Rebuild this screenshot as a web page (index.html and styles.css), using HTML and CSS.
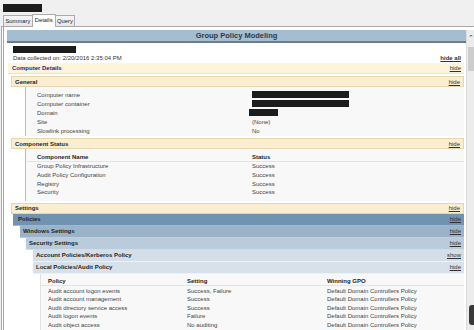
FILE: index.html
```html
<!DOCTYPE html>
<html lang="en">
<head>
    <meta charset="UTF-8">
    <meta name="viewport" content="width=device-width, initial-scale=1.0">
    <title>Group Policy Modeling</title>
    <link rel="stylesheet" href="styles.css">
</head>
<body>
    <div class="window">
        <div class="caption">
            <span class="redact caption-redact"></span>
        </div>

        <div class="tabs">
            <span class="tab">Summary</span>
            <span class="tab active">Details</span>
            <span class="tab">Query</span>
        </div>

        <div class="panel">
            <div class="report">
                <div class="report-title">Group Policy Modeling</div>

                <div class="report-body">
                    <div class="redact name-redact"></div>
                    <div class="meta">
                        <span>Data collected on: 2/20/2016 2:35:04 PM</span>
                        <a class="toggle strong">hide all</a>
                    </div>

                    <!-- Computer details -->
                    <div class="section computer">
                        <span>Computer Details</span>
                        <a class="toggle">hide</a>
                    </div>

                    <div class="section cream">
                        <span>General</span>
                        <a class="toggle">hide</a>
                    </div>
                    <div class="block list">
                        <div class="row"><span>Computer name</span><span class="redact value-redact"></span></div>
                        <div class="row"><span>Computer container</span><span class="redact value-redact"></span></div>
                        <div class="row"><span>Domain</span><span class="redact value-redact short"></span></div>
                        <div class="row"><span>Site</span><span>(None)</span></div>
                        <div class="row"><span>Slowlink processing</span><span>No</span></div>
                    </div>

                    <div class="section cream">
                        <span>Component Status</span>
                        <a class="toggle">hide</a>
                    </div>
                    <div class="block table">
                        <div class="row head"><span>Component Name</span><span>Status</span></div>
                        <div class="row"><span>Group Policy Infrastructure</span><span>Success</span></div>
                        <div class="row"><span>Audit Policy Configuration</span><span>Success</span></div>
                        <div class="row"><span>Registry</span><span>Success</span></div>
                        <div class="row"><span>Security</span><span>Success</span></div>
                    </div>

                    <!-- Settings tree -->
                    <div class="section cream">
                        <span>Settings</span>
                        <a class="toggle">hide</a>
                    </div>
                    <div class="section level-1">
                        <span>Policies</span>
                        <a class="toggle">hide</a>
                    </div>
                    <div class="section level-2">
                        <span>Windows Settings</span>
                        <a class="toggle">hide</a>
                    </div>
                    <div class="section level-3">
                        <span>Security Settings</span>
                        <a class="toggle">hide</a>
                    </div>
                    <div class="section level-4">
                        <span>Account Policies/Kerberos Policy</span>
                        <a class="toggle">show</a>
                    </div>
                    <div class="section level-4 last">
                        <span>Local Policies/Audit Policy</span>
                        <a class="toggle">hide</a>
                    </div>
                    <div class="block policy-table">
                        <div class="row head"><span>Policy</span><span>Setting</span><span>Winning GPO</span></div>
                        <div class="row"><span>Audit account logon events</span><span>Success, Failure</span><span>Default Domain Controllers Policy</span></div>
                        <div class="row"><span>Audit account management</span><span>Success</span><span>Default Domain Controllers Policy</span></div>
                        <div class="row"><span>Audit directory service access</span><span>Success</span><span>Default Domain Controllers Policy</span></div>
                        <div class="row"><span>Audit logon events</span><span>Failure</span><span>Default Domain Controllers Policy</span></div>
                        <div class="row"><span>Audit object access</span><span>No auditing</span><span>Default Domain Controllers Policy</span></div>
                    </div>
                </div>
            </div>

            <div class="scrollbar">
                <span class="scroll-arrow">&#8963;</span>
                <span class="scroll-thumb"></span>
            </div>
        </div>

        <div class="edge-handle"></div>
    </div>
</body>
</html>
```

FILE: styles.css
```css
:root {
    --window-bg: #f0f0f0;
    --border-color: #a9a9a9;
    --cream: #fdf4dc;
    --cream-dark: #fbedcf;
    --cream-border: #e6d6ae;
    --text-color: #2a2a2a;
    --muted-text: #444;
}

body {
    margin: 0;
    padding: 0;
    background-color: var(--window-bg);
    font-family: 'Liberation Sans', Arial, sans-serif;
    font-size: 6px;
    color: var(--text-color);
    overflow: hidden;
}

.window {
    position: relative;
    width: 474px;
    height: 330px;
    overflow: hidden;
}

.redact {
    display: block;
    background-color: #1c1c1c;
}

.caption {
    height: 14px;
    padding: 4px 0 0 3px;
    box-sizing: border-box;
}

.caption-redact {
    width: 39px;
    height: 8px;
}

/* Tabs */
.tabs {
    display: flex;
    align-items: flex-end;
    height: 12px;
    padding-left: 3px;
}

.tab {
    height: 10px;
    line-height: 10px;
    padding: 0 1.5px;
    border: 1px solid #acacac;
    border-bottom: none;
    margin-right: -1px;
    background: linear-gradient(#f5f5f5, #e6e6e6);
    font-size: 5.8px;
    color: #222;
}

.tab.active {
    height: 12px;
    line-height: 11px;
    padding: 0 2px;
    background: #fff;
    position: relative;
    z-index: 1;
    margin-bottom: -1px;
}

/* Panel */
.panel {
    display: flex;
    height: 304px;
    margin-left: 1px;
    border-top: 1px solid var(--border-color);
    border-left: 3px double var(--border-color);
    background-color: #fff;
}

.report {
    flex: 1;
    padding: 3px 0 0 3px;
}

.report-title {
    height: 11px;
    line-height: 11px;
    text-align: center;
    font-size: 7.5px;
    font-weight: bold;
    color: #2b3a4a;
    background-color: #a5bdd0;
    border-bottom: 2px solid #6f7b87;
}

.report-body {
    padding: 0 2px 0 1px;
}

.name-redact {
    width: 63px;
    height: 7px;
    margin: 3px 0 0 5px;
}

.meta {
    display: flex;
    justify-content: space-between;
    align-items: center;
    height: 10px;
    padding: 0 3px 0 5px;
    color: #333;
}

.toggle {
    color: #333;
    text-decoration: underline;
}

.toggle.strong {
    font-weight: bold;
}

/* Section headers */
.section {
    display: flex;
    justify-content: space-between;
    align-items: center;
    height: 11px;
    padding: 0 3px;
    box-sizing: border-box;
    font-weight: bold;
    color: #1f1f1f;
}

.section .toggle {
    font-weight: normal;
}

.section.computer {
    height: 11px;
    padding-left: 4px;
    background-color: var(--cream);
    border-bottom: 1px solid #efe3c2;
    color: #23238c;
}

.section.cream {
    margin: 2px 0 0 3px;
    background-color: var(--cream-dark);
    border: 1px solid var(--cream-border);
}

.section.level-1,
.section.level-2,
.section.level-3,
.section.level-4 {
    height: 12px;
    border-bottom: 1px solid rgba(255, 255, 255, 0.35);
}

.section.level-1 {
    margin-left: 5px;
    padding-left: 5px;
    background-color: #7292b2;
}

.section.level-2 {
    margin-left: 12px;
    background-color: #9bb3c9;
}

.section.level-3 {
    margin-left: 18px;
    background-color: #bacbdb;
}

.section.level-4 {
    margin-left: 25px;
    background-color: #d4dee8;
    border-bottom-color: #eef2f6;
}

.section.level-4.last {
    background-color: #d8e1ea;
}

/* Content blocks */
.block {
    margin-left: 17px;
    border-left: 1px solid #bdbdbd;
    background-color: #f8f8f8;
}

.block .row {
    display: grid;
    align-items: center;
    color: var(--muted-text);
}

.list {
    padding: 3px 0 1px 11px;
}

.list .row {
    grid-template-columns: 215px 1fr;
    height: 9px;
}

.value-redact {
    width: 97px;
    height: 7px;
}

.value-redact.short {
    width: 29px;
    margin-left: -3px;
}

.table {
    padding: 3px 0 4px 0;
}

.table .row {
    grid-template-columns: 215px 1fr;
    height: 8.7px;
    padding-left: 11px;
}

.row.head {
    height: 9px;
    font-weight: bold;
    color: #1f1f1f;
    border-bottom: 1px solid #e4e4e4;
}

.policy-table {
    margin-left: 32px;
    padding: 3px 0 4px 0;
    border-left-color: #e2e2e2;
}

.policy-table .row {
    grid-template-columns: 139px 140px 1fr;
    height: 8.5px;
    padding-left: 7px;
}

/* Scrollbar */
.scrollbar {
    position: relative;
    width: 7px;
    margin-top: 3px;
    background-color: #ececec;
    border-left: 1px solid #dcdcdc;
}

.scroll-arrow {
    position: absolute;
    top: 4px;
    left: 0;
    width: 7px;
    text-align: center;
    font-size: 7px;
    line-height: 7px;
    color: #333;
}

.scroll-thumb {
    position: absolute;
    top: 17px;
    left: 1px;
    width: 6px;
    height: 24px;
    background-color: #cdcdcd;
}

.edge-handle {
    position: absolute;
    right: 0;
    top: 305px;
    width: 5px;
    height: 20px;
    border-radius: 3px 0 0 3px;
    background-color: #3a3a3a;
}
```
